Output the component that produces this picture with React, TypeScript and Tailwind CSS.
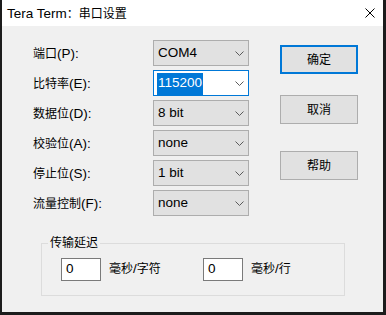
import React from "react";

const FONT = { fontFamily: '"Liberation Sans","Noto Sans CJK SC",sans-serif' };

function Chevron() {
  return (
    <svg width="9" height="5" viewBox="0 0 9 5" className="shrink-0">
      <polyline points="0.5,0.5 4.5,4.5 8.5,0.5" fill="none" stroke="#5a5a5a" strokeWidth="1" />
    </svg>
  );
}

function Combo({ value, focused }: { value: string; focused?: boolean }) {
  return (
    <div
      className={
        "w-[96px] h-[26px] flex items-center justify-between pr-[4px] border " +
        (focused ? "bg-white border-[#0078d7] pl-[3px]" : "bg-[#e1e1e1] border-[#adadad] pl-[3px]")
      }
    >
      {focused ? (
        <span className="h-[22px] mt-[1px] flex items-center bg-[#0078d7] text-white text-[13.5px] px-[1px]">{value}</span>
      ) : (
        <span className="text-[13.5px] text-black pl-[1px]">{value}</span>
      )}
      <Chevron />
    </div>
  );
}

function Btn({ label, def, className }: { label: string; def?: boolean; className?: string }) {
  return (
    <button
      className={
        "w-[78px] h-[29px] bg-[#e1e1e1] flex items-center justify-center text-[12px] text-black " +
        (def ? "border-2 border-[#0078d7] " : "border border-[#adadad] ") +
        (className || "")
      }
    >
      {label}
    </button>
  );
}

const rows: { cjk: string; key: string; value: string; focused?: boolean }[] = [
  { cjk: "端口", key: "(P):", value: "COM4" },
  { cjk: "比特率", key: "(E):", value: "115200", focused: true },
  { cjk: "数据位", key: "(D):", value: "8 bit" },
  { cjk: "校验位", key: "(A):", value: "none" },
  { cjk: "停止位", key: "(S):", value: "1 bit" },
  { cjk: "流量控制", key: "(F):", value: "none" },
];

export default function App() {
  return (
    <div
      style={FONT}
      className="w-[386px] h-[315px] bg-[#f0f0f0] flex flex-col border-l-2 border-r-[3px] border-b-[3px] border-[#1c1c1c] overflow-hidden"
    >
      <div className="h-[26px] bg-white flex items-center justify-between pl-[5px] pr-[8px] shrink-0">
        <span className="text-black">
          <span className="text-[13.5px]">Tera Term</span>
          <span className="text-[12px]">：串口设置</span>
        </span>
        <svg width="10" height="10" viewBox="0 0 10 10">
          <line x1="0.5" y1="0.5" x2="9.5" y2="9.5" stroke="#000" strokeWidth="1" />
          <line x1="9.5" y1="0.5" x2="0.5" y2="9.5" stroke="#000" strokeWidth="1" />
        </svg>
      </div>

      <div className="flex pt-[14px]">
        <div className="pl-[31px] flex flex-col gap-[4px]">
          {rows.map((r) => (
            <div key={r.cjk} className="flex items-center h-[26px]">
              <span className="w-[120px] text-black">
                <span className="text-[12px]">{r.cjk}</span>
                <span className="text-[13.5px]">{r.key}</span>
              </span>
              <Combo value={r.value} focused={r.focused} />
            </div>
          ))}
        </div>
        <div className="ml-[31px] flex flex-col pt-[5px]">
          <Btn label="确定" def />
          <Btn label="取消" className="mt-[21px]" />
          <Btn label="帮助" className="mt-[27px]" />
        </div>
      </div>

      <fieldset className="ml-[39px] mt-[19px] w-[304px] border border-[#dcdcdc] pl-[6px] pt-[7px] pb-[14px]">
        <legend className="px-[2px] text-[12px] leading-4 text-black">传输延迟</legend>
        <div className="flex items-center ml-[13px]">
          <div className="w-[40px] h-[23px] bg-white border border-[#7a7a7a] flex items-center pl-[4px] text-[13.5px] text-black">0</div>
          <span className="ml-[8px] w-[94px] text-[12px] text-black">
            毫秒<span className="text-[13.5px]">/</span>字符
          </span>
          <div className="w-[40px] h-[23px] bg-white border border-[#7a7a7a] flex items-center pl-[4px] text-[13.5px] text-black">0</div>
          <span className="ml-[8px] text-[12px] text-black">
            毫秒<span className="text-[13.5px]">/</span>行
          </span>
        </div>
      </fieldset>
    </div>
  );
}
